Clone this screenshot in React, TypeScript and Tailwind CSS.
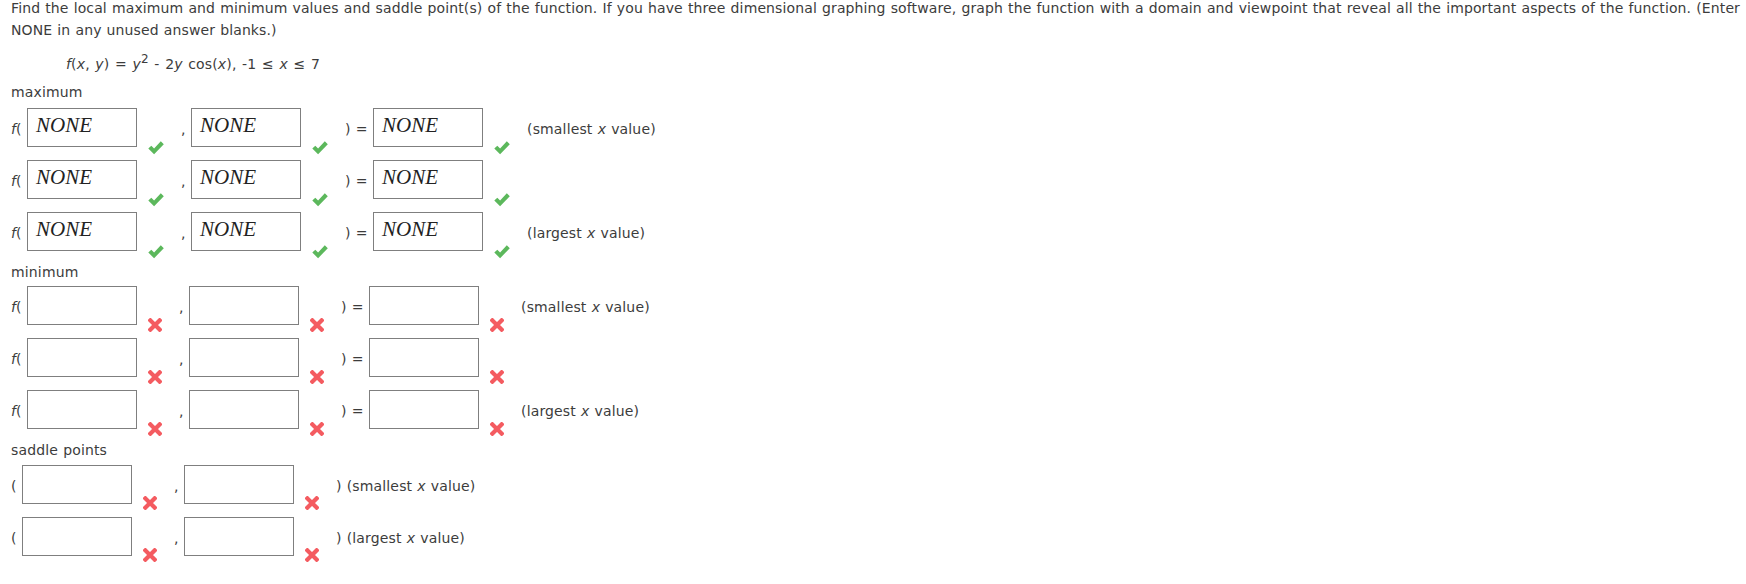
import React from "react";

const Check = () => (
  <svg width="17" height="15" viewBox="0 0 16 14">
    <path d="M0.3 8.0 L3.3 5.2 L6.1 8.0 L12.8 0.8 L15.8 3.7 L6.1 13.7 Z" fill="#5cb85c" />
  </svg>
);

const Cross = () => (
  <svg width="14" height="14" viewBox="0 0 14 14">
    <path d="M2.4 2.4 L11.6 11.6 M11.6 2.4 L2.4 11.6" stroke="#f45b60" strokeWidth="4.2" strokeLinecap="square" />
  </svg>
);

const Box = ({ value }: { value?: string }) => (
  <div className="w-[110px] h-[39px] shrink-0 border border-[#7f7f7f] bg-white">
    {value ? (
      <div className="pl-[8px] pt-[6px] leading-[21px] text-[21px] italic tracking-normal font-['Liberation_Serif',serif] text-[#222]">
        {value}
      </div>
    ) : null}
  </div>
);

const Icon = ({ ok, saddle }: { ok: boolean; saddle?: boolean }) =>
  ok ? (
    <div className="ml-[11px] mt-[32px] w-[16px] h-[15px] shrink-0 flex">
      <Check />
    </div>
  ) : saddle ? (
    <div className="ml-[11px] mt-[31px] w-[14px] h-[14px] shrink-0 flex">
      <Cross />
    </div>
  ) : (
    <div className="ml-[11px] mt-[32px] w-[14px] h-[14px] shrink-0 flex">
      <Cross />
    </div>
  );

const Label = ({ which }: { which: string }) => (
  <span className="ml-[17px] pt-[13px] leading-[16px] whitespace-nowrap">
    ({which} <i>x</i> value)
  </span>
);

const FRow = ({ ok, value, label }: { ok: boolean; value?: string; label?: string }) => (
  <div className="flex items-start h-[52px]">
    <span className="w-[16px] shrink-0 pt-[13px] leading-[16px] whitespace-nowrap">
      <i>f</i>(
    </span>
    <Box value={value} />
    <Icon ok={ok} />
    <span className="w-[27px] shrink-0 pl-[17px] pt-[13px] leading-[16px]">,</span>
    <Box value={value} />
    <Icon ok={ok} />
    <span className="w-[45px] shrink-0 pl-[17px] pt-[13px] leading-[16px] whitespace-nowrap">) =</span>
    <Box value={value} />
    <Icon ok={ok} />
    {label ? <Label which={label} /> : null}
  </div>
);

const SRow = ({ label }: { label: string }) => (
  <div className="flex items-start h-[52px]">
    <span className="w-[11px] shrink-0 pt-[13px] leading-[16px]">(</span>
    <Box />
    <Icon ok={false} saddle />
    <span className="w-[27px] shrink-0 pl-[17px] pt-[13px] leading-[16px]">,</span>
    <Box />
    <Icon ok={false} saddle />
    <span className="ml-[17px] pt-[13px] leading-[16px] whitespace-nowrap">
      ) ({label} <i>x</i> value)
    </span>
  </div>
);

export default function App() {
  return (
    <div className="w-[1746px] h-[584px] overflow-hidden bg-white pl-[11px] text-[14px] text-[#3c3c3c] tracking-[0.15px] [word-spacing:0.5px] font-['DejaVu_Sans',Verdana,sans-serif]">
      <p className="-mt-[3px] leading-[22px] whitespace-nowrap tracking-[0.12px]">
        Find the local maximum and minimum values and saddle point(s) of the function. If you have three dimensional graphing software, graph the function with a domain and viewpoint that reveal all the important aspects of the function. (Enter
        <br />
        NONE in any unused answer blanks.)
      </p>
      <div className="mt-[12px] pl-[55px] leading-[22px] whitespace-nowrap [word-spacing:1px]">
        <i>f</i>(<i>x</i>, <i>y</i>) = <i>y</i>
        <sup className="text-[12px]">2</sup> - 2<i>y</i> cos(<i>x</i>), -1 ≤ <i>x</i> ≤ 7
      </div>
      <div className="mt-[9px] leading-[16px]">maximum</div>
      <div className="mt-[8px]">
        <FRow ok value="NONE" label="smallest" />
        <FRow ok value="NONE" />
        <FRow ok value="NONE" label="largest" />
      </div>
      <div className="leading-[16px]">minimum</div>
      <div className="mt-[6px]">
        <FRow ok={false} label="smallest" />
        <FRow ok={false} />
        <FRow ok={false} label="largest" />
      </div>
      <div className="leading-[16px]">saddle points</div>
      <div className="mt-[7px]">
        <SRow label="smallest" />
        <SRow label="largest" />
      </div>
    </div>
  );
}
